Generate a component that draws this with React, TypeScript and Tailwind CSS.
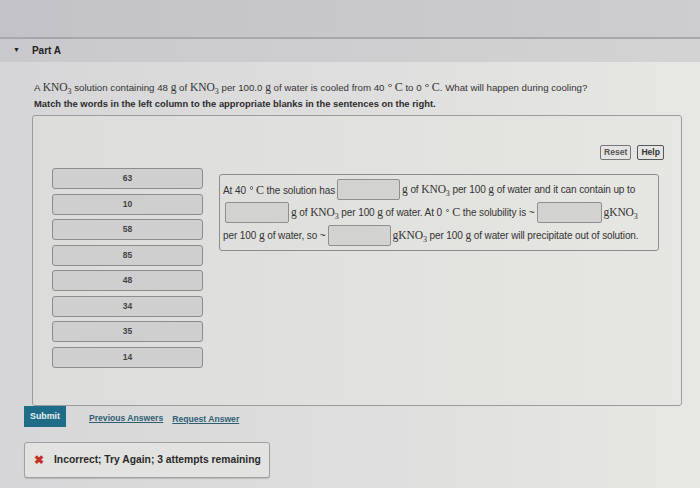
import React from "react";

const sans = "font-['Liberation_Sans','Arial',sans-serif]";
const serif = "font-['Liberation_Serif','Times_New_Roman',serif]";

function Chem() {
  return (
    <span className={`${serif} text-[11.5px] text-[#333]`}>
      KNO<sub className="text-[8px] align-[-1px]">3</sub>
    </span>
  );
}

function G() {
  return <span className={`${serif} text-[11.5px]`}>g</span>;
}

function Deg() {
  return (
    <>
      <span className="mx-[1px] inline-block h-[3.5px] w-[3.5px] -translate-y-[4px] rounded-full border border-[#555]" />
      <span className={`${serif} ml-[2px] text-[12px]`}>C</span>
    </>
  );
}

function Blank({ w = "w-[63px]" }: { w?: string }) {
  return (
    <span className={`inline-block ${w} h-[21px] shrink-0 rounded-[2px] border border-[#8f8f8f] bg-[#d2d2d0] mx-[2px]`} />
  );
}

const tiles = ["63", "10", "58", "85", "48", "34", "35", "14"];

export default function App() {
  return (
    <div className={`${sans} relative h-[488px] w-[700px] overflow-hidden bg-gradient-to-r from-[#d6d6d8] via-[#dedede] to-[#e7e7e3] text-[#333]`}>
      {/* top band */}
      <div className="h-[37px] bg-gradient-to-r from-[#c3c3c7] to-[#cdcdcf]" />
      <div className="h-[2px] bg-[#a8a8ac]" />
      {/* header */}
      <div className="flex h-[23px] items-center bg-gradient-to-r from-[#c9c9cd] to-[#d3d3d3] pl-[13px]">
        <span className="text-[7px] text-[#222]">▼</span>
        <span className="ml-[12px] text-[10px] font-bold text-[#222]">Part A</span>
      </div>

      <div className="pl-[34px] pt-[18px] text-[9.7px] text-[#333]">
        <p className="leading-[14px]">
          A <Chem /> solution containing 48 <G /> of <Chem /> per 100.0 <G /> of water is cooled from 40 <Deg /> to 0 <Deg />.
          What will happen during cooling?
        </p>
        <p className="mt-[3px] text-[9.4px] font-bold leading-[12px] text-[#2c2c2c]">
          Match the words in the left column to the appropriate blanks in the sentences on the right.
        </p>
      </div>

      {/* main panel */}
      <div className="ml-[32px] mt-[5px] h-[291px] w-[650px] rounded-[3px] border border-[#9c9c9c] bg-gradient-to-r from-[#dcdcdb] to-[#e6e6e2]">
        <div className="flex justify-end gap-[6px] pr-[17px] pt-[29px]">
          <button className="h-[15px] rounded-[2px] border border-[#777] bg-[#e4e4e4] px-[3px] text-[8.6px] font-bold leading-[13px] text-[#555]">
            Reset
          </button>
          <button className="h-[15px] rounded-[2px] border border-[#555] bg-[#e4e4e4] px-[3px] text-[8.6px] font-bold leading-[13px] text-[#333]">
            Help
          </button>
        </div>

        <div className="mt-[8px] flex items-start">
          <div className="ml-[19px] flex w-[151px] flex-col gap-[4.5px]">
            {tiles.map((t) => (
              <div
                key={t}
                className="flex h-[21px] items-center justify-center rounded-[3px] border border-[#8c8c8c] bg-[#cfcfcf] text-[8.5px] font-bold text-[#444]"
              >
                {t}
              </div>
            ))}
          </div>

          <div className="ml-[16px] mt-[6px] w-[440px] rounded-[3px] border border-[#8c8c8c] px-[3px] py-[3px] text-[10px] tracking-[-0.1px] text-[#333]">
            <div className="flex h-[23px] items-center whitespace-nowrap">
              <span>
                At 40 <Deg /> the solution has
              </span>
              <Blank />
              <span>
                <G /> of <Chem /> per 100 <G /> of water and it can contain up to
              </span>
            </div>
            <div className="flex h-[23px] items-center whitespace-nowrap">
              <Blank w="w-[64px]" />
              <span>
                <G /> of <Chem /> per 100 <G /> of water. At 0 <Deg /> the solubility is ~
              </span>
              <Blank w="w-[65px]" />
              <span className={`${serif} text-[11.5px]`}>
                gKNO<sub className="text-[8px] align-[-1px]">3</sub>
              </span>
            </div>
            <div className="flex h-[23px] items-center whitespace-nowrap">
              <span>
                per 100 <G /> of water, so ~
              </span>
              <Blank />
              <span>
                <span className={`${serif} text-[11.5px]`}>
                  gKNO<sub className="text-[8px] align-[-1px]">3</sub>
                </span>{" "}
                per 100 <G /> of water will precipitate out of solution.
              </span>
            </div>
          </div>
        </div>
      </div>

      {/* submit row */}
      <div className="ml-[24px] flex items-center">
        <button className="h-[21px] w-[42px] bg-[#1f6c88] text-[8.8px] font-bold text-[#e8f0f3]">Submit</button>
        <a className="ml-[23px] mt-[4px] text-[8.6px] font-bold text-[#2f5f75] underline">Previous Answers</a>
        <a className="ml-[9px] mt-[5px] text-[8.6px] font-bold text-[#2f5f75] underline">Request Answer</a>
      </div>

      {/* feedback */}
      <div className="ml-[24px] mt-[15px] flex h-[36px] w-[246px] items-center rounded-[3px] border border-[#a0a0a0] bg-[#e2e2e0] shadow-[0_1px_1px_rgba(0,0,0,0.15)]">
        <span className="ml-[9px] text-[12px] font-bold leading-none text-[#c62f26]">✖</span>
        <span className="ml-[10px] text-[10.3px] font-bold text-[#2a2a2a]">Incorrect; Try Again; 3 attempts remaining</span>
      </div>
    </div>
  );
}
